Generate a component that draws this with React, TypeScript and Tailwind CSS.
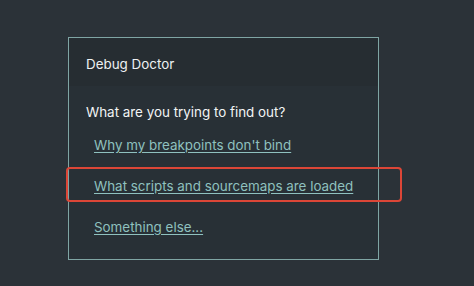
export default function App() {
  const options = [
    'Why my breakpoints don\'t bind',
    'What scripts and sourcemaps are loaded',
    'Something else...',
  ]

  return (
    <div
      className="w-[474px] h-[286px] bg-[#2b3238] pt-[37px] pl-[68px]"
      style={{ fontFamily: 'Inter, "Noto Sans", sans-serif' }}
    >
      <div className="relative w-[311px] h-[223px] border border-[#7fa5a4] bg-[#283036]">
        {/* Header */}
        <div className="h-[48px] bg-[#262d32] pl-[17px] pt-[16px] text-[13.4px] leading-[20px] text-[#eef1f2]">
          Debug Doctor
        </div>

        {/* Body */}
        <div className="pl-[17px] pt-[16px]">
          <p className="text-[13.4px] leading-[20px] text-[#f2f4f5]">What are you trying to find out?</p>
          <ul className="mt-[12px] pl-[8px] flex flex-col gap-[21px]">
            {options.map(o => (
              <li key={o} className="leading-[20px] h-[20px]">
                <a href="#" className="text-[13.4px] leading-[20px] text-[#8fc1bf] underline underline-offset-2">
                  {o}
                </a>
              </li>
            ))}
          </ul>
        </div>

        {/* Highlight */}
        <div className="absolute left-[-3px] top-[129px] w-[336px] h-[35px] border-2 border-[#dc4637] rounded-[4px]" />
      </div>
    </div>
  )
}
